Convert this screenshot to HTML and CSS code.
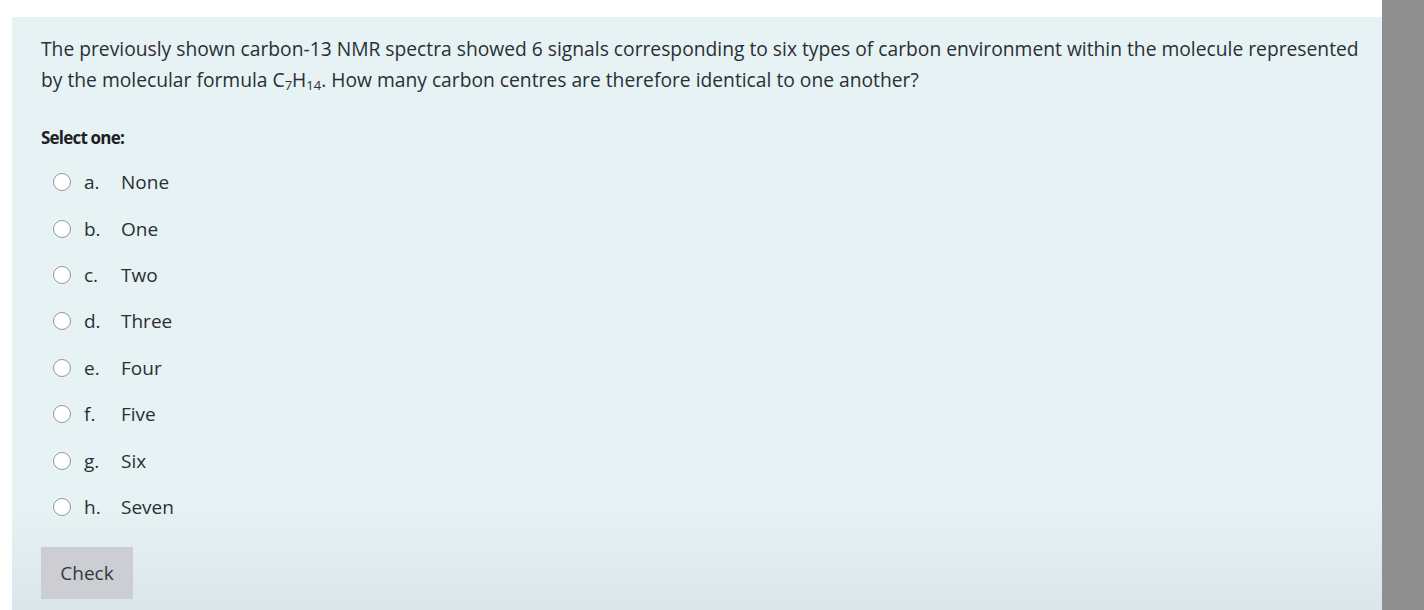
FILE: index.html
```html
<!DOCTYPE html>
<html lang="en">
<head>
  <meta charset="UTF-8">
  <meta name="viewport" content="width=device-width, initial-scale=1.0">
  <title>Quiz question</title>
  <link rel="stylesheet" href="styles.css">
</head>
<body>
  <div class="page">
    <!-- Question panel -->
    <div class="question">
      <p class="qtext">The previously shown carbon-13 NMR spectra showed 6 signals corresponding to six types of carbon environment within the molecule represented by the molecular formula C<sub>7</sub>H<sub>14</sub>. How many carbon centres are therefore identical to one another?</p>

      <p class="prompt">Select one:</p>

      <div class="answers">
        <label class="answer"><input type="radio" name="q1"><span class="num">a.</span><span>None</span></label>
        <label class="answer"><input type="radio" name="q1"><span class="num">b.</span><span>One</span></label>
        <label class="answer"><input type="radio" name="q1"><span class="num">c.</span><span>Two</span></label>
        <label class="answer"><input type="radio" name="q1"><span class="num">d.</span><span>Three</span></label>
        <label class="answer"><input type="radio" name="q1"><span class="num">e.</span><span>Four</span></label>
        <label class="answer"><input type="radio" name="q1"><span class="num">f.</span><span>Five</span></label>
        <label class="answer"><input type="radio" name="q1"><span class="num">g.</span><span>Six</span></label>
        <label class="answer"><input type="radio" name="q1"><span class="num">h.</span><span>Seven</span></label>
      </div>

      <button type="button" class="check">Check</button>
    </div>
  </div>
  <div class="sidebar"></div>
</body>
</html>
```

FILE: styles.css
```css
html, body {
  height: 100%;
}
body {
  margin: 0;
  display: flex;
  background: #fff;
  font-family: "Open Sans", "Noto Sans", sans-serif;
  color: #2a2f33;
  overflow: hidden;
}
.page {
  flex: 1;
  padding: 17px 0 0 12px;
}
.sidebar {
  width: 42px;
  background: #8f8f8f;
}
.question {
  height: 100%;
  box-sizing: border-box;
  padding: 16px 20px 0 29px;
  background: linear-gradient(to bottom, #e7f2f5 0%, #e7f2f5 82%, #dbe6ea 100%);
}
.qtext {
  margin: 0;
  font-size: 19.25px;
  line-height: 31px;
}
.qtext sub {
  font-size: 13px;
  line-height: 0;
  vertical-align: -3px;
}
.prompt {
  margin: 31px 0 0;
  font-size: 17px;
  font-weight: bold;
  letter-spacing: -0.8px;
  color: #1d2125;
}
.answers {
  margin-top: 10px;
  display: flex;
  flex-direction: column;
}
.answer {
  display: flex;
  align-items: center;
  height: 46.4px;
  font-size: 19px;
}
.answer input {
  width: 18px;
  height: 18px;
  margin: 0 13px 0 12px;
  appearance: none;
  border: 1.5px solid #94979a;
  border-radius: 50%;
  background: #fff;
}
.answer .num {
  width: 37px;
}
.check {
  margin-top: 17px;
  width: 92px;
  height: 52px;
  border: none;
  background: #ccced3;
  color: #33383c;
  font-family: "Open Sans", "Noto Sans", sans-serif;
  font-size: 19px;
}
```
